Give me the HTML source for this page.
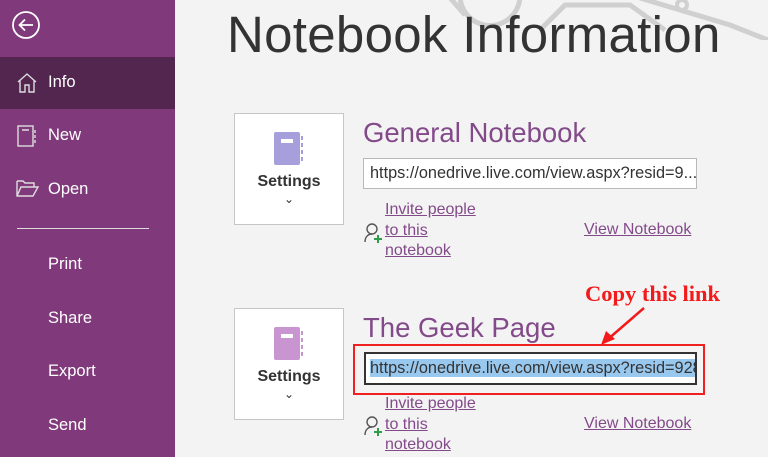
<!DOCTYPE html>
<html><head><style>
body{margin:0;width:768px;height:457px;overflow:hidden;background:#f3f3f3;font-family:"Liberation Sans",sans-serif;position:relative}
.side{position:absolute;left:0;top:0;width:175px;height:457px;background:#80397b}
.it{position:absolute;left:0;width:175px;height:52px;color:#fff;font-size:16.5px}
.it span{position:absolute;left:48px;top:16px}
.abs{position:absolute}
.box{position:absolute;left:234px;width:108px;height:110px;background:#fff;border:1px solid #c6c6c6}
.box .l{position:absolute;top:59px;width:100%;text-align:center;font-size:16px;font-weight:bold;color:#333}
.box .c{position:absolute;top:78px;width:100%;text-align:center;font-size:12px;color:#333}
.t{position:absolute;left:363px;font-size:27.5px;color:#834a8a}
.url{position:absolute;background:#fff;border:1px solid #b8b8b8;font-size:16.3px;color:#333;white-space:nowrap;overflow:hidden}
a{color:#834a8a;text-decoration:underline;font-size:16px;position:absolute;line-height:20.5px}
</style></head><body>
<div class="side">
 <svg class="abs" style="left:12px;top:11px" width="30" height="30"><circle cx="14" cy="14" r="13" fill="none" stroke="#fff" stroke-width="1.8"/><path d="M21 14H8M13 8.5L7.5 14L13 19.5" fill="none" stroke="#fff" stroke-width="1.8"/></svg>
 <div class="it" style="top:57px;background:#52264f"><svg class="abs" style="left:16px;top:15px" width="22" height="22"><path d="M2 10L11 2L20 10M4 8V20H9V13H13V20H18V8" fill="none" stroke="#ddd" stroke-width="1.4"/></svg><span>Info</span></div>
 <div class="it" style="top:110px"><svg class="abs" style="left:16px;top:14px" width="22" height="24"><rect x="2" y="2" width="15" height="20" fill="none" stroke="#ddd" stroke-width="1.4"/><path d="M6 6h7M19 6v3M19 11v3M19 16v3" stroke="#ddd" stroke-width="1.4"/></svg><span>New</span></div>
 <div class="it" style="top:164px"><svg class="abs" style="left:16px;top:15px" width="24" height="20"><path d="M1 2H7L9 4H18V8M1 2V17H17L22 8H5L1 17" fill="none" stroke="#ddd" stroke-width="1.4"/></svg><span>Open</span></div>
 <div class="abs" style="left:17px;top:228px;width:132px;height:1px;background:#ddd"></div>
 <div class="it" style="top:239px"><span>Print</span></div>
 <div class="it" style="top:293px"><span>Share</span></div>
 <div class="it" style="top:346px"><span>Export</span></div>
 <div class="it" style="top:400px"><span>Send</span></div>
</div>
<svg class="abs" style="left:430px;top:0" width="338" height="40"><path d="M30 -5a30 30 0 1 1 0 1M15 -8L35 15" fill="none" stroke="#d0d0d0" stroke-width="5"/><path d="M110 30L135 5H200L235 30M210 -2L300 25L338 40" fill="none" stroke="#d0d0d0" stroke-width="5"/><circle cx="252" cy="5" r="5" fill="none" stroke="#d0d0d0" stroke-width="4"/></svg>
<div class="abs" style="left:227px;top:5px;font-size:51px;color:#333;letter-spacing:0.3px">Notebook Information</div>

<div class="box" style="top:113px"><svg class="abs" style="left:38px;top:17px" width="32" height="36"><rect x="1" y="1" width="26" height="33" rx="2" fill="#a79fdc"/><rect x="8" y="8" width="12" height="4" fill="#fff"/><path d="M29 5v4M29 12v4M29 19v4M29 26v4" stroke="#a79fdc" stroke-width="2"/></svg><div class="l">Settings</div><div class="c">⌄</div></div>
<div class="t" style="top:117px">General Notebook</div>
<div class="url" style="left:363px;top:158px;width:326px;height:29px;line-height:29px;padding-left:6px">https://onedrive.live.com/view.aspx?resid=9...</div>
<svg class="abs" style="left:363px;top:222px" width="22" height="22"><circle cx="9" cy="7" r="5" fill="none" stroke="#555" stroke-width="1.4"/><path d="M2 20c0-6 4-8 7-8" fill="none" stroke="#555" stroke-width="1.4"/><path d="M15 13v8M11 17h8" stroke="#2f9e4a" stroke-width="2"/></svg>
<a style="left:385px;top:200px">Invite people<br>to this<br>notebook</a>
<a style="left:584px;top:220px">View Notebook</a>

<div class="box" style="top:308px"><svg class="abs" style="left:38px;top:17px" width="32" height="36"><rect x="1" y="1" width="26" height="33" rx="2" fill="#c995d0"/><rect x="8" y="8" width="12" height="4" fill="#fff"/><path d="M29 5v4M29 12v4M29 19v4M29 26v4" stroke="#c995d0" stroke-width="2"/></svg><div class="l">Settings</div><div class="c">⌄</div></div>
<div class="t" style="top:312px">The Geek Page</div>
<div class="abs" style="left:353px;top:344px;width:348px;height:47px;border:2px solid #f02020"></div>
<div class="url" style="left:364px;top:352px;width:325px;height:29px;border:2px solid #333;line-height:29px;padding-left:4px"><span style="background:#99c8ee">https://onedrive.live.com/view.aspx?resid=928</span></div>
<svg class="abs" style="left:363px;top:415px" width="22" height="22"><circle cx="9" cy="7" r="5" fill="none" stroke="#555" stroke-width="1.4"/><path d="M2 20c0-6 4-8 7-8" fill="none" stroke="#555" stroke-width="1.4"/><path d="M15 13v8M11 17h8" stroke="#2f9e4a" stroke-width="2"/></svg>
<a style="left:385px;top:394px">Invite people<br>to this<br>notebook</a>
<a style="left:584px;top:414px">View Notebook</a>

<div class="abs" style="left:585px;top:281px;font-family:'Liberation Serif',serif;font-weight:bold;font-size:22.5px;color:#f21a1a">Copy this link</div>
<svg class="abs" style="left:595px;top:300px" width="60" height="50"><path d="M49 8L12 40" stroke="#f21a1a" stroke-width="2.5"/><path d="M6 45L11 31L20 39Z" fill="#f21a1a"/></svg>
</body></html>
